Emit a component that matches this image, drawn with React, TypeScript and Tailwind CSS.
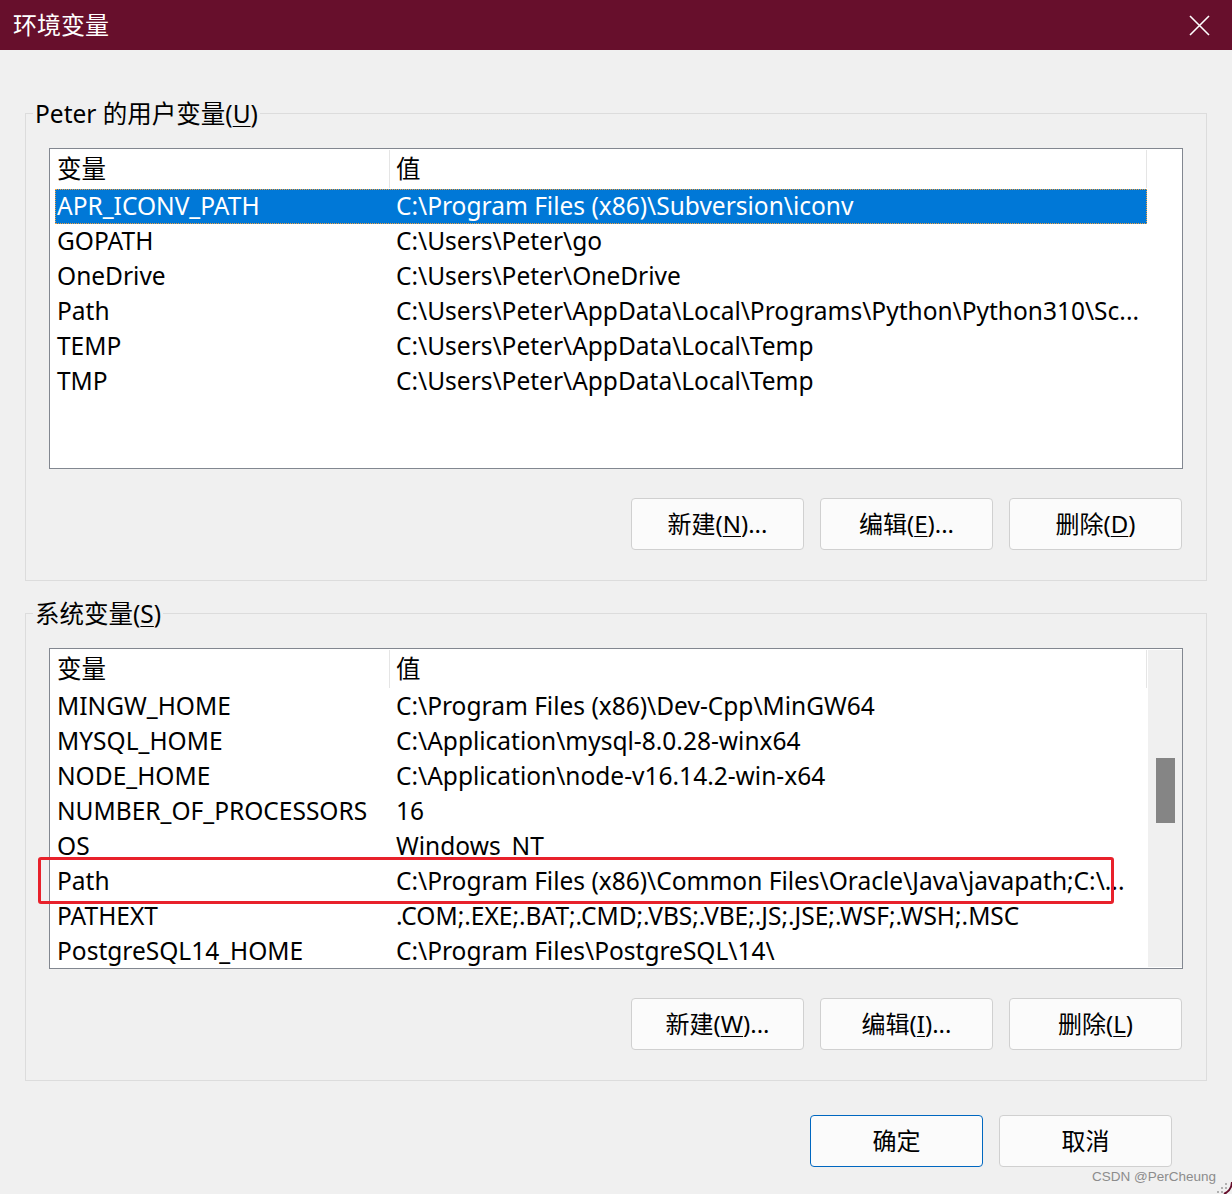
import React from 'react';

type Row = { name: string; value: string };

const USER_VARS: Row[] = [
  { name: 'APR_ICONV_PATH', value: 'C:\\Program Files (x86)\\Subversion\\iconv' },
  { name: 'GOPATH', value: 'C:\\Users\\Peter\\go' },
  { name: 'OneDrive', value: 'C:\\Users\\Peter\\OneDrive' },
  { name: 'Path', value: 'C:\\Users\\Peter\\AppData\\Local\\Programs\\Python\\Python310\\Sc...' },
  { name: 'TEMP', value: 'C:\\Users\\Peter\\AppData\\Local\\Temp' },
  { name: 'TMP', value: 'C:\\Users\\Peter\\AppData\\Local\\Temp' },
];

const SYSTEM_VARS: Row[] = [
  { name: 'MINGW_HOME', value: 'C:\\Program Files (x86)\\Dev-Cpp\\MinGW64' },
  { name: 'MYSQL_HOME', value: 'C:\\Application\\mysql-8.0.28-winx64' },
  { name: 'NODE_HOME', value: 'C:\\Application\\node-v16.14.2-win-x64' },
  { name: 'NUMBER_OF_PROCESSORS', value: '16' },
  { name: 'OS', value: 'Windows_NT' },
  { name: 'Path', value: 'C:\\Program Files (x86)\\Common Files\\Oracle\\Java\\javapath;C:\\...' },
  { name: 'PATHEXT', value: '.COM;.EXE;.BAT;.CMD;.VBS;.VBE;.JS;.JSE;.WSF;.WSH;.MSC' },
  { name: 'PostgreSQL14_HOME', value: 'C:\\Program Files\\PostgreSQL\\14\\' },
];

// label with one underlined mnemonic letter, e.g. 新建(N)...
function Mnemonic({ before, letter, after }: { before: string; letter: string; after: string }) {
  return (
    <span>
      {before}(<span className="underline underline-offset-[3px] decoration-1">{letter}</span>){after}
    </span>
  );
}

function Button({ children, primary }: { children: React.ReactNode; primary?: boolean }) {
  return (
    <button
      className={
        primary
          ? 'w-[173px] h-[52px] rounded-[4px] border border-[#0067c0] bg-[#fbfbfb] text-[24px] text-black'
          : 'w-[173px] h-[52px] rounded-[4px] border border-[#d0d0d0] bg-[#fbfbfb] text-[24px] text-black'
      }
    >
      {children}
    </button>
  );
}

function VarList({ rows, selected, scrollbar }: { rows: Row[]; selected?: number; scrollbar?: boolean }) {
  return (
    <div className="h-[321px] border border-[#828790] bg-white flex overflow-hidden">
      <div className="w-[1098px] flex flex-col">
        {/* header */}
        <div className="h-[40px] flex shrink-0">
          <div className="w-[340px] pl-[7px] border-r border-[#e5e5e5] my-[1px] flex items-center">变量</div>
          <div className="w-[757px] pl-[6px] border-r border-[#e5e5e5] my-[1px] flex items-center">值</div>
        </div>
        {rows.map((r, i) => (
          <div
            key={r.name}
            className={
              i === selected
                ? 'ml-[5px] w-[1092px] h-[35px] shrink-0 flex items-center bg-[#0078d7] text-white border border-dotted border-[#f0a040]'
                : 'ml-[5px] w-[1092px] h-[35px] shrink-0 flex items-center border border-transparent'
            }
          >
            <div className="w-[333px] pl-[1px] whitespace-nowrap overflow-hidden">{r.name}</div>
            <div className="flex-1 pl-[7px] whitespace-nowrap overflow-hidden">{r.value}</div>
          </div>
        ))}
      </div>
      <div className={scrollbar ? 'w-[34px] my-[1px] bg-[#f0f0f0] flex flex-col items-center' : 'w-[34px]'}>
        {scrollbar && <div className="mt-[108px] w-[19px] h-[65px] bg-[#858585]" />}
      </div>
    </div>
  );
}

function GroupBox({ label, children }: { label: React.ReactNode; children: React.ReactNode }) {
  return (
    <div className="relative border border-[#dcdcdc] px-[23px] pt-[34px] pb-[30px]">
      <div className="absolute left-[7px] top-[-16px] px-[2px] bg-[#f0f0f0] leading-[32px]">{label}</div>
      {children}
    </div>
  );
}

export default function App() {
  return (
    <div className="relative w-[1232px] h-[1194px] bg-[#f0f0f0] overflow-hidden text-black text-[24.5px] font-['Noto_Sans','Noto_Sans_CJK_SC',sans-serif]">
      {/* title bar */}
      <div className="h-[50px] bg-[#670f2c] flex items-center justify-between pl-[13px] pr-[22px]">
        <span className="text-white text-[24px] leading-none">环境变量</span>
        <svg width="21" height="21" viewBox="0 0 21 21" className="text-white">
          <path d="M1 1L20 20M20 1L1 20" stroke="currentColor" strokeWidth="1.6" />
        </svg>
      </div>

      <div className="px-[25px] pt-[63px]">
        <GroupBox label={<span>Peter 的用户变量(<span className="underline underline-offset-[3px] decoration-1">U</span>)</span>}>
          <VarList rows={USER_VARS} selected={0} />
          <div className="flex justify-end gap-[16px] pt-[29px] pr-[1px]">
            <Button><Mnemonic before="新建" letter="N" after="..." /></Button>
            <Button><Mnemonic before="编辑" letter="E" after="..." /></Button>
            <Button><Mnemonic before="删除" letter="D" after="" /></Button>
          </div>
        </GroupBox>

        <div className="mt-[32px]">
          <GroupBox label={<Mnemonic before="系统变量" letter="S" after="" />}>
            <VarList rows={SYSTEM_VARS} scrollbar />
            <div className="flex justify-end gap-[16px] pt-[29px] pr-[1px]">
              <Button><Mnemonic before="新建" letter="W" after="..." /></Button>
              <Button><Mnemonic before="编辑" letter="I" after="..." /></Button>
              <Button><Mnemonic before="删除" letter="L" after="" /></Button>
            </div>
          </GroupBox>
        </div>

        <div className="flex justify-end gap-[16px] pt-[34px] pr-[35px]">
          <Button primary>确定</Button>
          <Button>取消</Button>
        </div>
      </div>

      {/* red annotation around the Path row */}
      <div className="absolute left-[38px] top-[857px] w-[1076px] h-[47px] border-[3px] border-[#e8212b] rounded-[3px]" />

      {/* watermark */}
      <div className="absolute left-[1092px] top-[1170px] text-[13.5px] leading-none text-[#8c8c8c] font-['Liberation_Sans',sans-serif]">
        CSDN @PerCheung
      </div>
      <svg className="absolute right-0 bottom-0" width="16" height="14" viewBox="0 0 16 14">
        <path d="M16 2 A14 14 0 0 1 8 14" stroke="#670f2c" strokeWidth="2" fill="none" />
        <rect x="9" y="3" width="2" height="2" fill="#b0b0b0" />
        <rect x="5" y="7" width="2" height="2" fill="#b0b0b0" />
        <rect x="9" y="7" width="2" height="2" fill="#b0b0b0" />
        <rect x="1" y="11" width="2" height="2" fill="#b0b0b0" />
        <rect x="5" y="11" width="2" height="2" fill="#b0b0b0" />
      </svg>
    </div>
  );
}
